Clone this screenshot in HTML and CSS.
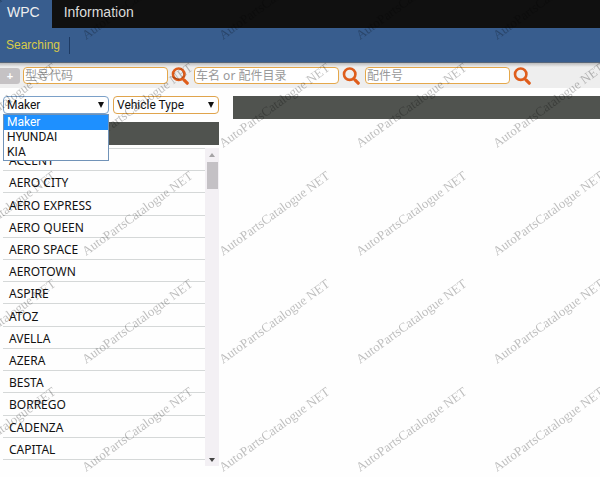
FILE: index.html
```html
<!DOCTYPE html>
<html lang="en">
<head>
<meta charset="utf-8">
<title>WPC</title>
<link rel="stylesheet" href="styles.css">
</head>
<body>
<svg class="defs" aria-hidden="true">
  <symbol id="magnifier" viewBox="0 0 18 18">
    <circle cx="7.7" cy="7.2" r="5.7" fill="none" stroke="#df5d1b" stroke-width="2.6"/>
    <path d="M11.5 11.5 L13.5 13.5" stroke="#df5d1b" stroke-width="2.4"/>
    <path d="M13.2 13.2 L16.2 16.2" stroke="#df5d1b" stroke-width="3.2" stroke-linecap="round"/>
  </symbol>
</svg>
<nav class="tabs">
  <a class="tab active" href="#">WPC</a>
  <a class="tab" href="#">Information</a>
</nav>
<nav class="subnav"><a href="#">Searching</a></nav>
<form class="search">
  <button class="add" type="button">+</button>
  <div class="field"><input type="text" aria-label="型号代码" placeholder="型号代码"><button type="button" aria-label="Search"><svg><use href="#magnifier"/></svg></button></div>
  <div class="field"><input type="text" aria-label="车名 or 配件目录" placeholder="车名 or 配件目录"><button type="button" aria-label="Search"><svg><use href="#magnifier"/></svg></button></div>
  <div class="field"><input type="text" aria-label="配件号" placeholder="配件号"><button type="button" aria-label="Search"><svg><use href="#magnifier"/></svg></button></div>
</form>
<main>
  <aside>
    <div class="filters">
      <div class="picker open">
        <select aria-label="Maker"><option>Maker</option><option>HYUNDAI</option><option>KIA</option></select>
        <ul class="menu"><li class="current">Maker</li><li>HYUNDAI</li><li>KIA</li></ul>
      </div>
      <div class="picker">
        <select aria-label="Vehicle Type"><option>Vehicle Type</option></select>
      </div>
    </div>
    <div class="bar"></div>
    <div class="models">
      <ul class="list">
        <li>ACCENT</li><li>AERO CITY</li><li>AERO EXPRESS</li><li>AERO QUEEN</li><li>AERO SPACE</li><li>AEROTOWN</li><li>ASPIRE</li><li>ATOZ</li><li>AVELLA</li><li>AZERA</li><li>BESTA</li><li>BORREGO</li><li>CADENZA</li><li>CAPITAL</li>
      </ul>
      <div class="scrollbar"><i class="up"></i><i class="thumb"></i><i class="down"></i></div>
    </div>
  </aside>
  <section><div class="bar"></div></section>
</main>
<svg class="watermark" aria-hidden="true">
  <defs>
    <pattern id="mark" x="78" y="44" width="137" height="108" patternUnits="userSpaceOnUse">
      <text x="8" y="104" transform="rotate(-36 8 104)">AutoPartsCatalogue NET</text>
    </pattern>
  </defs>
  <rect width="100%" height="100%" fill="url(#mark)"/>
</svg>
</body>
</html>
```
FILE: styles.css
```css
* { box-sizing: border-box; }
body {
  margin: 0;
  background: #fefefe;
  color: #111;
  font: 12px/15px "Noto Sans", "Noto Sans CJK SC", sans-serif;
}
ul { margin: 0; padding: 0; list-style: none; }
a { text-decoration: none; }
button { border: 0; padding: 0; background: none; }
.defs { display: none; }

.tabs { display: flex; height: 28px; background: #101010; }
.tab {
  padding: 0 12px 4px;
  color: #ddd;
  font: 14px/24px "Liberation Sans", sans-serif;
}
.tab.active { padding: 0 12px 0 7px; background: #385d8e; color: #eee; }

.subnav {
  display: flex;
  align-items: center;
  height: 35px;
  padding: 0 6px;
  background: #385d8e;
  border-bottom: 1px solid #566579;
}
.subnav a {
  padding-right: 9px;
  border-right: 1px solid #1d3a63;
  color: #d8cb48;
  font: 12px/17px "Liberation Sans", sans-serif;
}

.search {
  display: flex;
  align-items: center;
  height: 25px;
  background: linear-gradient(#bbb, #eee 4px);
}
.add {
  width: 20px;
  height: 16px;
  margin-right: 3px;
  border-radius: 0 3px 3px 0;
  background: #c5c2c4;
  color: #fff;
  font: bold 11px/14px "Liberation Sans", sans-serif;
}
.field { display: flex; align-items: center; gap: 3px; margin-right: 5px; }
.field input {
  width: 145px;
  height: 17px;
  padding: 0 1px;
  border: 1px solid #e5a84b;
  border-radius: 4px;
  background: #fff;
  font: 12px/15px "Noto Sans", "Noto Sans CJK SC", sans-serif;
}
.field input::placeholder { color: #999; }
.field button { width: 18px; height: 18px; }
.field svg { display: block; width: 18px; height: 18px; }

main { display: flex; gap: 14px; padding: 8px 0 0 3px; }
aside { flex: 0 0 216px; }
section { flex: 1; }
.bar { height: 23px; background: #50534f; }
.filters { display: flex; gap: 4px; margin-bottom: 8px; }
.picker { position: relative; flex: 1; }
.picker::after {
  content: "";
  position: absolute;
  top: 6px;
  right: 5px;
  border: solid transparent;
  border-width: 6px 3px 0;
  border-top-color: #111;
}
.picker select {
  display: block;
  appearance: none;
  width: 100%;
  height: 18px;
  padding: 0 3px;
  border: 1px solid #e0a44c;
  border-radius: 4px;
  background: #fff;
  color: #111;
  font: 12px/16px Roboto, sans-serif;
}
.picker.open select { border-color: #7ba0c8; }
.menu {
  position: absolute;
  z-index: 3;
  top: 18px;
  left: 0;
  width: 100%;
  border: 1px solid #7193b8;
  background: #fff;
  font: 12px/15px Roboto, sans-serif;
}
.menu li { padding-left: 3px; }
.menu .current { background: #1e90ff; color: #fff; }

.models { display: flex; margin-top: 3px; }
.list {
  display: grid;
  grid-auto-rows: 1fr;
  flex: 1;
  height: 312px;
  border-top: 1px solid #d5d8d8;
}
.list li {
  display: flex;
  align-items: center;
  padding: 2px 0 0 6px;
  border-bottom: 1px solid #d5d8d8;
}
.scrollbar {
  display: flex;
  flex-direction: column;
  align-items: center;
  width: 14px;
  height: 318px;
  padding: 5px 0 4px;
  background: #f3f0f4;
}
.up { border: solid transparent; border-width: 0 3px 4px; border-bottom-color: #a5a3a5; }
.thumb { width: 11px; height: 27px; margin-top: 5px; background: #c4c1c5; }
.down { margin-top: auto; border: solid transparent; border-width: 4px 3px 0; border-top-color: #444; }

.watermark {
  position: fixed;
  z-index: 2;
  inset: 0;
  width: 100%;
  height: 100%;
  pointer-events: none;
}
.watermark text {
  fill: #000;
  fill-opacity: 0.26;
  font: 13px "Liberation Serif", serif;
}
```
